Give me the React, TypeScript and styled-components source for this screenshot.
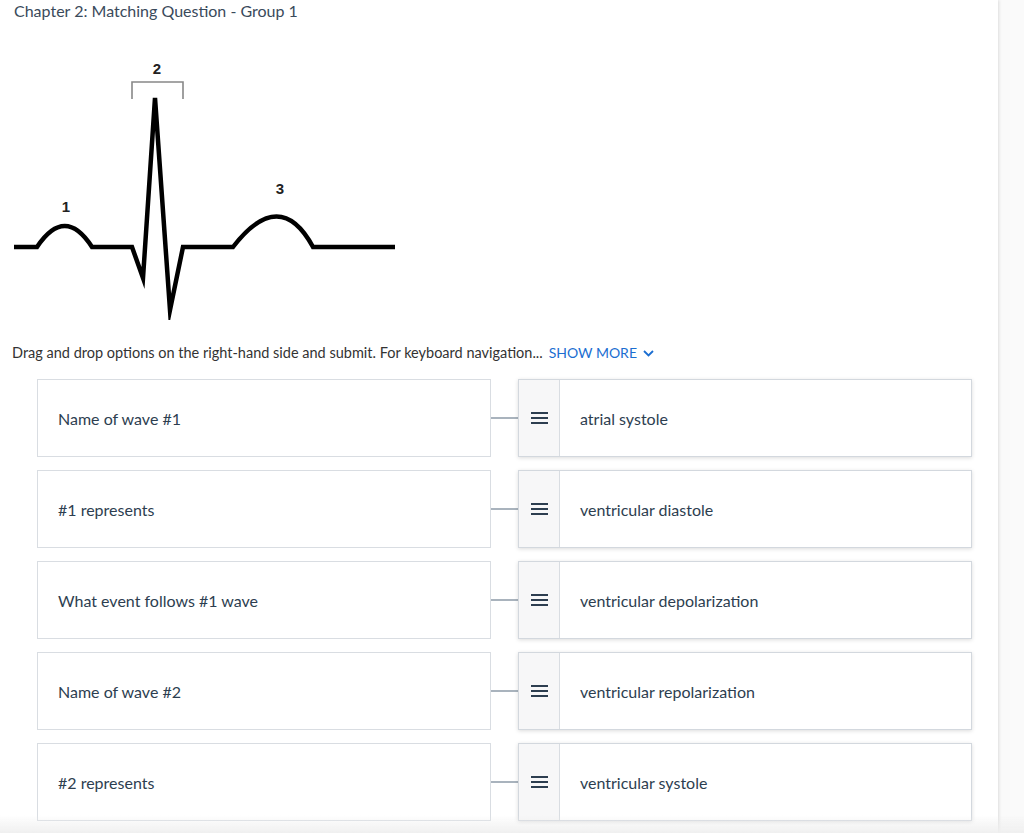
import styled, { createGlobalStyle } from 'styled-components'

const GlobalStyle = createGlobalStyle`
  html, body {
    margin: 0;
    padding: 0;
    background: #fafafa;
    font-family: 'Lato', 'Liberation Sans', sans-serif;
  }
`

const Page = styled.div`
  width: 998px;
  min-height: 833px;
  background: #fff;
  box-shadow: 1px 0 3px rgba(0, 0, 0, 0.12);
  box-sizing: border-box;
  padding: 2px 0 0 14px;
`

const Title = styled.h1`
  margin: 0;
  font-size: 16px;
  font-weight: 400;
  color: #3a4a5b;
  line-height: 18px;
`

const Figure = styled.div`
  margin-top: 40px;
  width: 390px;
  height: 260px;
`

const Instructions = styled.p`
  margin: 24px 0 0 -2px;
  font-size: 14.5px;
  color: #333;
  line-height: 18px;
`

const ShowMore = styled.button`
  border: 0;
  background: none;
  padding: 0;
  margin-left: 6px;
  font: inherit;
  font-size: 14px;
  color: #1b6ed1;
  cursor: pointer;
  display: inline-flex;
  align-items: center;
  gap: 6px;
`

const Rows = styled.div`
  display: flex;
  flex-direction: column;
  gap: 13px;
  margin-top: 17px;
  padding-left: 23px;
`

const Row = styled.div`
  display: grid;
  grid-template-columns: 454px 27px 454px;
  height: 78px;
`

const Prompt = styled.div`
  border: 1px solid #d9dde2;
  display: flex;
  align-items: center;
  padding: 0 20px;
  font-size: 16px;
  color: #2d3e50;
  box-sizing: border-box;
`

const Connector = styled.div`
  align-self: center;
  height: 2px;
  background: #a9b3bd;
`

const Answer = styled.div`
  border: 1px solid #d3d8de;
  box-shadow: 0 1px 4px rgba(0, 0, 0, 0.14);
  display: flex;
  box-sizing: border-box;
  background: #fff;
`

const Handle = styled.div`
  width: 40px;
  flex: none;
  background: #f7f7f8;
  border-right: 1px solid #d9dde2;
  display: flex;
  align-items: center;
  justify-content: center;
`

const AnswerText = styled.div`
  display: flex;
  align-items: center;
  padding: 0 20px;
  font-size: 16px;
  color: #2d3e50;
`

const BottomFade = styled.div`
  position: fixed;
  left: 0;
  right: 0;
  bottom: 0;
  height: 18px;
  background: linear-gradient(rgba(240, 240, 240, 0), rgba(238, 238, 238, 0.9));
  pointer-events: none;
`

function Ecg() {
  return (
    <svg width="390" height="260" viewBox="0 0 390 260">
      <g transform="translate(-14,-60)">
        <path
          d="M14 247 H37 Q65 205 92 247 H132 L143 278 L155 98 L170 310 L183 247 H233 Q280 186 313 247 H395"
          fill="none"
          stroke="#000"
          strokeWidth="4.5"
          strokeLinejoin="miter"
          strokeMiterlimit="10"
        />
        <path d="M132 99 V82 H183 V99" fill="none" stroke="#888" strokeWidth="1.6" />
        <g
          fontFamily="'Liberation Sans', Arial, sans-serif"
          fontSize="15"
          fontWeight="bold"
          fill="#222"
          textAnchor="middle"
        >
          <text x="157" y="74">2</text>
          <text x="66" y="212">1</text>
          <text x="280" y="194">3</text>
        </g>
      </g>
    </svg>
  )
}

function MenuIcon() {
  return (
    <svg width="17" height="12" viewBox="0 0 17 12">
      <g stroke="#2d3e50" strokeWidth="2">
        <line x1="0" y1="1" x2="17" y2="1" />
        <line x1="0" y1="6" x2="17" y2="6" />
        <line x1="0" y1="11" x2="17" y2="11" />
      </g>
    </svg>
  )
}

const pairs = [
  ['Name of wave #1', 'atrial systole'],
  ['#1 represents', 'ventricular diastole'],
  ['What event follows #1 wave', 'ventricular depolarization'],
  ['Name of wave #2', 'ventricular repolarization'],
  ['#2 represents', 'ventricular systole'],
]

export default function App() {
  return (
    <>
      <GlobalStyle />
      <Page>
        <Title>Chapter 2: Matching Question - Group 1</Title>
        <Figure>
          <Ecg />
        </Figure>
        <Instructions>
          Drag and drop options on the right-hand side and submit. For keyboard navigation...
          <ShowMore type="button">
            SHOW MORE
            <svg width="11" height="7" viewBox="0 0 11 7">
              <path d="M1 1 L5.5 5.5 L10 1" fill="none" stroke="#1b6ed1" strokeWidth="1.8" />
            </svg>
          </ShowMore>
        </Instructions>
        <Rows>
          {pairs.map(([prompt, answer]) => (
            <Row key={prompt}>
              <Prompt>{prompt}</Prompt>
              <Connector />
              <Answer>
                <Handle>
                  <MenuIcon />
                </Handle>
                <AnswerText>{answer}</AnswerText>
              </Answer>
            </Row>
          ))}
        </Rows>
      </Page>
      <BottomFade />
    </>
  )
}
